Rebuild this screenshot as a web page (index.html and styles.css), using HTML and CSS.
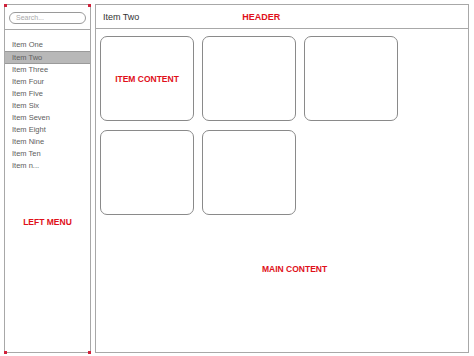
FILE: index.html
```html
<!DOCTYPE html>
<html lang="en">
<head>
  <meta charset="UTF-8" />
  <title>Layout Wireframe</title>
  <link rel="stylesheet" href="styles.css">
</head>
<body>
  <div class="frame">
    <div class="left">
      <span class="dot dot-tl"></span>
      <span class="dot dot-tr"></span>
      <span class="dot dot-bl"></span>
      <span class="dot dot-br"></span>

      <div class="search-bar">
        <div class="search">Search...</div>
      </div>

      <ul class="menu">
        <li>Item One</li>
        <li class="active">Item Two</li>
        <li>Item Three</li>
        <li>Item Four</li>
        <li>Item Five</li>
        <li>Item Six</li>
        <li>Item Seven</li>
        <li>Item Eight</li>
        <li>Item Nine</li>
        <li>Item Ten</li>
        <li>Item n...</li>
      </ul>

      <div class="note note-left">LEFT MENU</div>
    </div>

    <div class="main">
      <div class="header">
        <span class="title">Item Two</span>
        <span class="note note-header">HEADER</span>
      </div>

      <div class="cards">
        <div class="card"><span class="note">ITEM CONTENT</span></div>
        <div class="card"></div>
        <div class="card"></div>
        <div class="card"></div>
        <div class="card"></div>
      </div>

      <div class="note note-main">MAIN CONTENT</div>
    </div>
  </div>
</body>
</html>
```

FILE: styles.css
```css
* {
  margin: 0;
  padding: 0;
  box-sizing: border-box;
  font-family: 'Liberation Sans', Arial, sans-serif;
}

body {
  background: #fff;
  padding: 4px 5px 4px 4px;
  width: 474px;
  height: 356px;
}

.frame {
  display: flex;
  gap: 4px;
  height: 349px;
}

.left {
  width: 87px;
  border: 1px solid #a8a8a8;
  position: relative;
  display: flex;
  flex-direction: column;
}

/* red corner markers */
.dot {
  position: absolute;
  width: 3px;
  height: 3px;
  background: #d0213a;
}
.dot-tl { top: -1px; left: -1px; }
.dot-tr { top: -1px; right: -1px; }
.dot-bl { bottom: -2px; left: -1px; }
.dot-br { bottom: -2px; right: -1px; }

.search-bar {
  height: 25px;
  border-bottom: 1px solid #a8a8a8;
  padding: 7px 4px 0 4px;
}

.search {
  height: 12px;
  border: 1px solid #9a9a9a;
  border-radius: 6px;
  font-size: 7px;
  line-height: 10px;
  color: #aaa;
  padding-left: 6px;
}

.menu {
  list-style: none;
  margin-top: 9px;
}

.menu li {
  height: 12px;
  line-height: 12px;
  font-size: 7.5px;
  color: #606060;
  padding-left: 7px;
}

.menu li.active {
  background: #b8b8b8;
  border-top: 1px solid #9a9a9a;
  border-bottom: 1px solid #9a9a9a;
  height: 13px;
  line-height: 11px;
}

.note {
  color: #e0101a;
  font-weight: bold;
  font-size: 8.5px;
  white-space: nowrap;
}

.note-left {
  margin-top: 45px;
  text-align: center;
}

.main {
  flex: 1;
  border: 1px solid #a8a8a8;
  display: flex;
  flex-direction: column;
}

.header {
  height: 24px;
  border-bottom: 1px solid #a8a8a8;
  display: flex;
  align-items: center;
  padding-left: 7px;
}

.title {
  font-size: 9px;
  color: #333;
}

.note-header {
  font-size: 9px;
  margin-left: 103px;
}

.cards {
  display: grid;
  grid-template-columns: repeat(3, 94px);
  grid-auto-rows: 85px;
  column-gap: 8px;
  row-gap: 9px;
  padding: 7px 0 0 4px;
}

.card {
  border: 1px solid #8a8a8a;
  border-radius: 7px;
  display: flex;
  align-items: center;
  justify-content: center;
}

.note-main {
  margin-top: 49px;
  margin-left: 166px;
}
```
